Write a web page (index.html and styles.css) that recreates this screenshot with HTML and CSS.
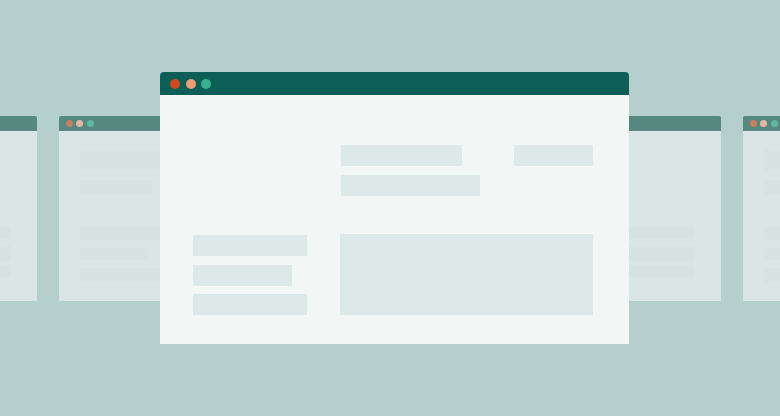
FILE: index.html
```html
<!DOCTYPE html>
<html lang="en">
<head>
<meta charset="utf-8">
<title>Windows</title>
<link rel="stylesheet" href="styles.css">
</head>
<body>
<div class="stage">
  <div class="bwin bw-l1">
    <div class="bbar"></div>
    <div class="bbody layout-b">
      <div class="fb fb1"></div>
      <div class="fb fb2"></div>
      <div class="fb fb3"></div>
    </div>
  </div>
  <div class="bwin bw-l2">
    <div class="bbar"><span class="bdot d1"></span><span class="bdot d2"></span><span class="bdot d3"></span></div>
    <div class="bbody layout-a">
      <div class="fb fa1"></div>
      <div class="fb fa2"></div>
      <div class="fb fa3"></div>
      <div class="fb fa4"></div>
      <div class="fb fa5"></div>
    </div>
  </div>
  <div class="bwin bw-r1">
    <div class="bbar"></div>
    <div class="bbody layout-b">
      <div class="fb fb1"></div>
      <div class="fb fb2"></div>
      <div class="fb fb3"></div>
    </div>
  </div>
  <div class="bwin bw-r2">
    <div class="bbar"><span class="bdot d1"></span><span class="bdot d2"></span><span class="bdot d3"></span></div>
    <div class="bbody layout-a">
      <div class="fb fa1"></div>
      <div class="fb fa2"></div>
      <div class="fb fa3"></div>
      <div class="fb fa4"></div>
      <div class="fb fa5"></div>
    </div>
  </div>

  <div class="mwin">
    <div class="mbar">
      <span class="mdot red"></span><span class="mdot orange"></span><span class="mdot green"></span>
    </div>
    <div class="mbody">
      <div class="lcol">
        <div class="blk l1"></div>
        <div class="blk l2"></div>
        <div class="blk l3"></div>
      </div>
      <div class="rcol">
        <div class="row1">
          <div class="blk a"></div>
          <div class="blk b"></div>
        </div>
        <div class="blk c"></div>
        <div class="blk d"></div>
      </div>
    </div>
  </div>
</div>
</body>
</html>
```

FILE: styles.css
```css
html, body {
  margin: 0;
  padding: 0;
}
body {
  font-family: "Liberation Sans", Arial, sans-serif;
  background: #b4cfcc;
}
.stage {
  position: relative;
  width: 780px;
  height: 416px;
  overflow: hidden;
  background: #b4cfcc;
}

/* back windows */
.bwin {
  position: absolute;
  top: 116px;
  width: 319px;
  height: 185px;
  display: flex;
  flex-direction: column;
  border-radius: 2px 2px 0 0;
  overflow: hidden;
}
.bw-l1 { left: -282px; }
.bw-l2 { left: 59px; }
.bw-r1 { left: 402px; }
.bw-r2 { left: 743px; }
.bbar {
  height: 15px;
  background: #55897f;
  display: flex;
  align-items: center;
  gap: 3.7px;
  padding-left: 6.5px;
  flex: none;
}
.bdot {
  width: 7px;
  height: 7px;
  border-radius: 50%;
  display: block;
}
.bdot.d1 { background: #c97f63; }
.bdot.d2 { background: #e3b7a2; }
.bdot.d3 { background: #5fb8a3; }
.bbody {
  flex: 1;
  background: #d9e6e5;
  display: flex;
  flex-direction: column;
}
.fb {
  background: #d6e3e2;
}
.layout-a {
  padding: 19px 0 0 21px;
}
.fa1 { width: 160px; height: 20px; }
.fa2 { width: 72px; height: 15px; margin-top: 10px; }
.fa3 { width: 160px; height: 13px; margin-top: 32px; }
.fa4 { width: 68px; height: 12px; margin-top: 8px; }
.fa5 { width: 160px; height: 14px; margin-top: 8px; }

.layout-b {
  padding: 96px 26px 0 0;
  align-items: flex-end;
}
.fb1 { width: 130px; height: 12px; }
.fb2 { width: 130px; height: 15px; margin-top: 7px; }
.fb3 { width: 130px; height: 12px; margin-top: 4px; }

/* main window */
.mwin {
  position: absolute;
  left: 160px;
  top: 72px;
  width: 469px;
  height: 272px;
  display: flex;
  flex-direction: column;
  border-radius: 4px 4px 0 0;
  overflow: hidden;
}
.mbar {
  height: 23px;
  flex: none;
  background: #0c5e57;
  display: flex;
  align-items: center;
  padding-left: 10px;
  gap: 5.5px;
}
.mdot {
  width: 10px;
  height: 10px;
  border-radius: 50%;
  display: block;
}
.mdot.red { background: #cf4a1f; }
.mdot.orange { background: #eb9e78; }
.mdot.green { background: #37b48f; }
.mbody {
  flex: 1;
  background: #f2f6f5;
  display: flex;
  align-items: flex-end;
  gap: 33px;
  padding: 50px 36px 29px 33px;
}
.blk {
  background: #dde8e8;
}
.lcol {
  width: 114px;
  display: flex;
  flex-direction: column;
}
.l1 { width: 114px; height: 21px; }
.l2 { width: 99px; height: 21px; margin-top: 9px; }
.l3 { width: 114px; height: 21px; margin-top: 8px; }
.rcol {
  width: 253px;
  display: flex;
  flex-direction: column;
}
.row1 {
  display: flex;
  justify-content: space-between;
  padding-left: 1px;
}
.a { width: 121px; height: 21px; }
.b { width: 79px; height: 21px; }
.c { width: 139px; height: 21px; margin-top: 9px; margin-left: 1px; }
.d { width: 253px; height: 81px; margin-top: 38px; }
```
